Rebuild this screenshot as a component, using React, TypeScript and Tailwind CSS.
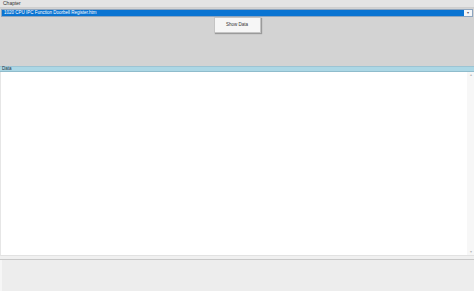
import React from 'react';

const App: React.FC = () => (
  <div className="w-[474px] h-[291px] flex flex-col bg-[#d3d3d3] font-['Liberation_Sans',sans-serif] text-[5px] leading-none overflow-hidden">
    {/* Chapter group */}
    <div className="h-[66px] flex flex-col">
      <div className="h-[8px] bg-[#e4e4e4] border-b border-[#cfcfcf] px-[3px] flex items-center text-[#333]">Chapter</div>
      <div className="mx-[1px] mt-[1px] h-[8px] bg-[#0a74d2] border border-[#8fa6bf] flex items-center">
        <span className="px-[2px] text-white flex-1 text-[4.5px]">1020 CPU IPC Function Doorbell Register.htm</span>
        <span className="w-[8px] h-full bg-[#f4f6f8] flex items-center justify-center text-[#556] text-[4px]">▾</span>
      </div>
      <div className="flex justify-center">
        <button className="w-[47px] h-[16px] bg-[#f6f6f6] border border-[#c4c4c4] shadow-[1px_1px_1px_#9a9a9a] text-[#333] text-[4.5px]">
          Show Data
        </button>
      </div>
    </div>
    {/* Data group */}
    <div className="h-[6px] bg-[#acd7e5] border-t border-[#9cc4d4] border-b border-b-[#8fbccc] px-[2px] flex items-center text-[#234] text-[4.5px]">Data</div>
    <div className="h-[183px] bg-white flex border-l border-[#e6e6e6]">
      <div className="flex-1" />
      <div className="w-[7px] bg-[#f7f7f7] flex flex-col justify-between items-center">
        <span className="text-[#bbb] text-[4px] mt-[1px]">▴</span>
        <span className="text-[#bbb] text-[4px] mb-[1px]">▾</span>
      </div>
    </div>
    <div className="h-[5px] bg-[#f0f0f0] border-t border-[#e2e2e2] border-b border-b-[#c8c8c8]" />
    <div className="flex-1 bg-[#ededed] border-l-[2px] border-[#f6f6f6]" />
  </div>
);

export default App;
